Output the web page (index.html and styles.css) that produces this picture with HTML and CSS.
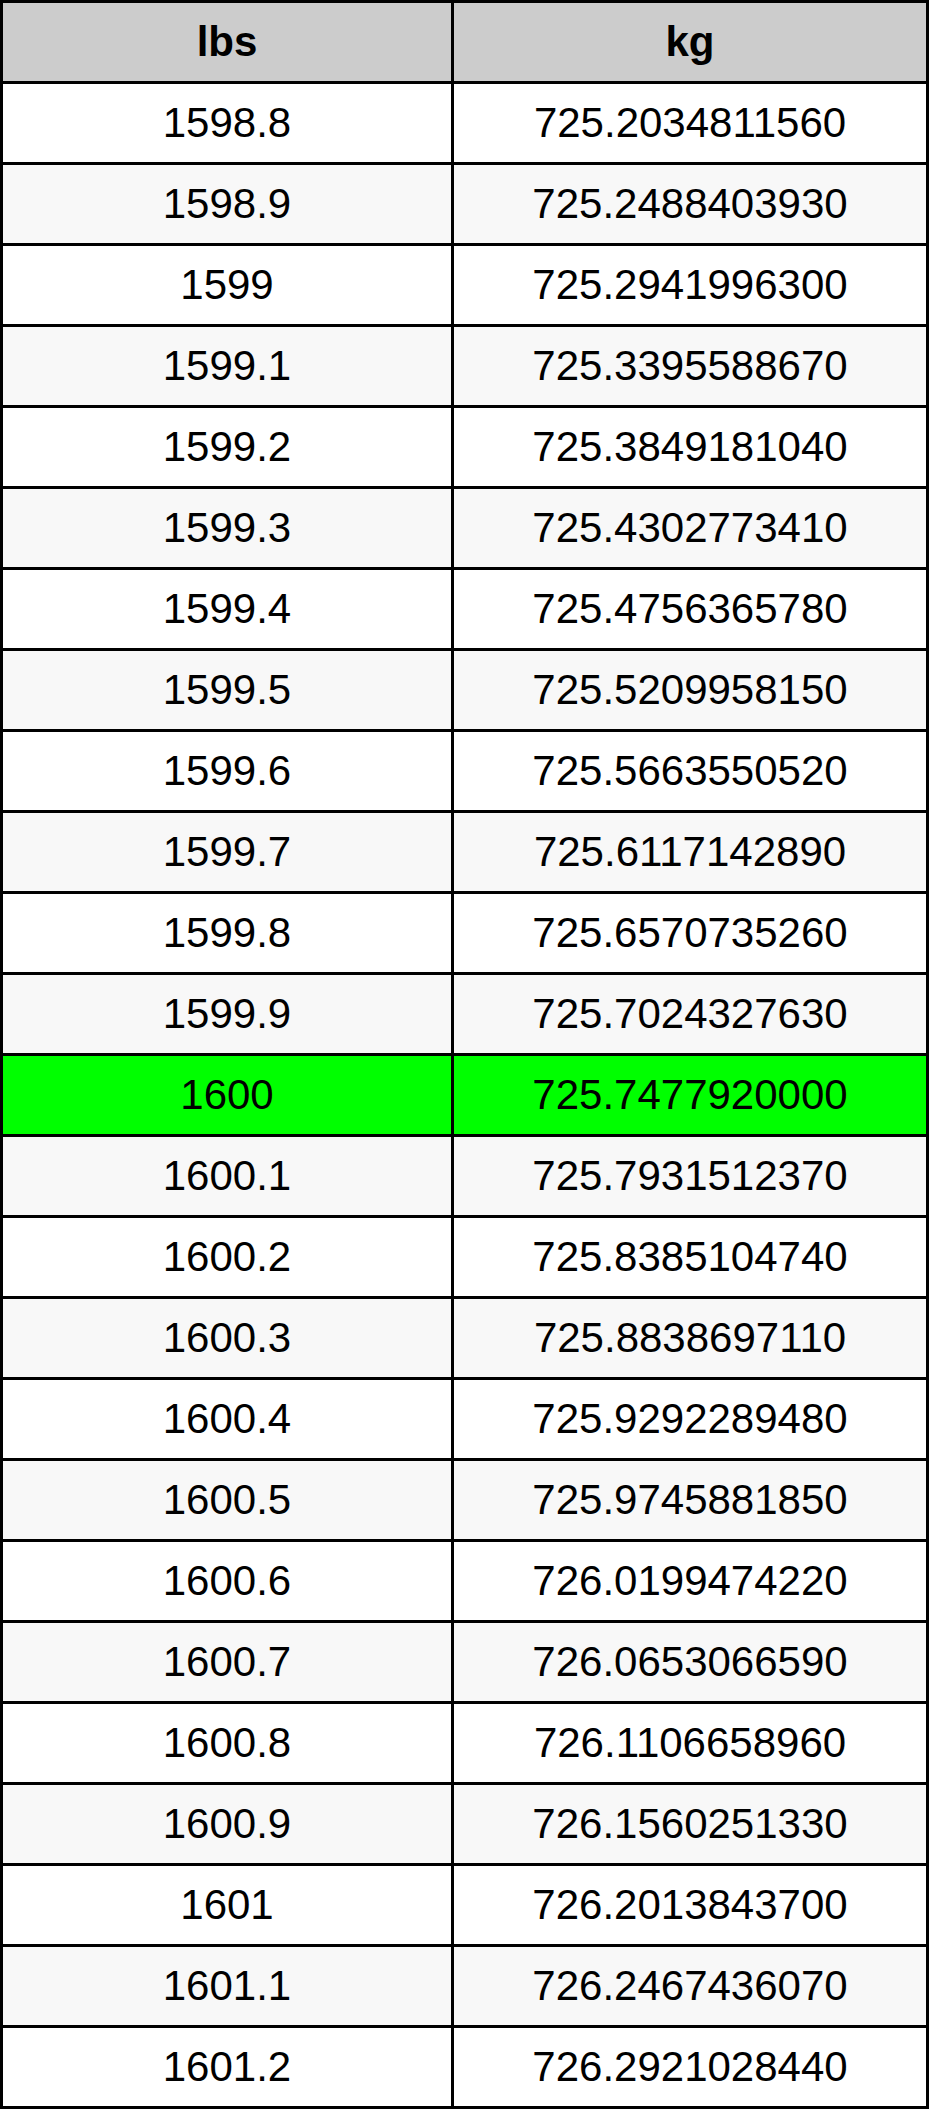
FILE: index.html
```html
<!DOCTYPE html>
<html lang="en">
<head>
<meta charset="utf-8">
<title>lbs to kg</title>
<link rel="stylesheet" href="styles.css">
</head>
<body>
<div class="table">
  <div class="row head"><div class="cell">lbs</div><div class="cell">kg</div></div>
  <div class="row"><div class="cell">1598.8</div><div class="cell">725.2034811560</div></div>
  <div class="row alt"><div class="cell">1598.9</div><div class="cell">725.2488403930</div></div>
  <div class="row"><div class="cell">1599</div><div class="cell">725.2941996300</div></div>
  <div class="row alt"><div class="cell">1599.1</div><div class="cell">725.3395588670</div></div>
  <div class="row"><div class="cell">1599.2</div><div class="cell">725.3849181040</div></div>
  <div class="row alt"><div class="cell">1599.3</div><div class="cell">725.4302773410</div></div>
  <div class="row"><div class="cell">1599.4</div><div class="cell">725.4756365780</div></div>
  <div class="row alt"><div class="cell">1599.5</div><div class="cell">725.5209958150</div></div>
  <div class="row"><div class="cell">1599.6</div><div class="cell">725.5663550520</div></div>
  <div class="row alt"><div class="cell">1599.7</div><div class="cell">725.6117142890</div></div>
  <div class="row"><div class="cell">1599.8</div><div class="cell">725.6570735260</div></div>
  <div class="row alt"><div class="cell">1599.9</div><div class="cell">725.7024327630</div></div>
  <div class="row hl"><div class="cell">1600</div><div class="cell">725.7477920000</div></div>
  <div class="row alt"><div class="cell">1600.1</div><div class="cell">725.7931512370</div></div>
  <div class="row"><div class="cell">1600.2</div><div class="cell">725.8385104740</div></div>
  <div class="row alt"><div class="cell">1600.3</div><div class="cell">725.8838697110</div></div>
  <div class="row"><div class="cell">1600.4</div><div class="cell">725.9292289480</div></div>
  <div class="row alt"><div class="cell">1600.5</div><div class="cell">725.9745881850</div></div>
  <div class="row"><div class="cell">1600.6</div><div class="cell">726.0199474220</div></div>
  <div class="row alt"><div class="cell">1600.7</div><div class="cell">726.0653066590</div></div>
  <div class="row"><div class="cell">1600.8</div><div class="cell">726.1106658960</div></div>
  <div class="row alt"><div class="cell">1600.9</div><div class="cell">726.1560251330</div></div>
  <div class="row"><div class="cell">1601</div><div class="cell">726.2013843700</div></div>
  <div class="row alt"><div class="cell">1601.1</div><div class="cell">726.2467436070</div></div>
  <div class="row"><div class="cell">1601.2</div><div class="cell">726.2921028440</div></div>
</div>
</body>
</html>
```
FILE: styles.css
```css
html, body {
  margin: 0;
  padding: 0;
  background: #ffffff;
}
.table {
  width: 926px;
  border-top: 3px solid #000;
  border-left: 3px solid #000;
  font-family: "Liberation Sans", Arial, Helvetica, sans-serif;
  font-size: 42px;
  color: #000;
}
.row {
  display: grid;
  grid-template-columns: 451px 475px;
  background: #ffffff;
}
.row.alt {
  background: #f8f8f8;
}
.row.hl {
  background: #00ff00;
}
.row.head {
  background: #cccccc;
  font-weight: bold;
}
.cell {
  height: 78px;
  display: flex;
  align-items: center;
  justify-content: center;
  border-right: 3px solid #000;
  border-bottom: 3px solid #000;
}
```
